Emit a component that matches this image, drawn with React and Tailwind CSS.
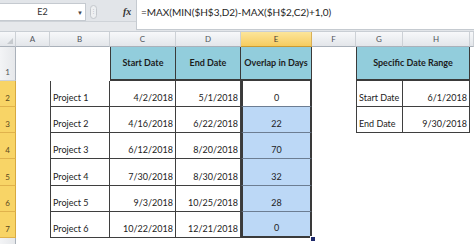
import React from 'react';

const projects = [
  ['Project 1', '4/2/2018', '5/1/2018', '0'],
  ['Project 2', '4/16/2018', '6/22/2018', '22'],
  ['Project 3', '6/12/2018', '8/20/2018', '70'],
  ['Project 4', '7/30/2018', '8/30/2018', '32'],
  ['Project 5', '9/3/2018', '10/25/2018', '28'],
  ['Project 6', '10/22/2018', '12/21/2018', '0'],
];

const rowHeights = ['h-[26px]', 'h-[26px]', 'h-[26px]', 'h-[27px]', 'h-[26px]', 'h-[26px]'];

const colHead = 'flex items-center justify-center bg-gradient-to-b from-[#f7f8fa] to-[#e3e6ea] border-r border-b border-r-[#cdd1d6] border-b-[#aab1ba] text-[8px] text-[#50545a]';
const teal = 'flex items-center justify-center whitespace-nowrap bg-[#92cddc] border-r border-b-2 border-[#3a3a3a] text-[9px] font-bold text-[#1c1c1c]';
const cell = 'flex items-end whitespace-nowrap pb-[2px] px-[2px] text-[9px] text-[#222]';

const FormulaBar = () => (
  <div className="flex h-[32px] bg-[#e2e5e9] border-b border-[#c9ced4]">
    <div className="flex flex-col w-[136px]">
      <div className="flex items-center h-[21px] pt-[2px]">
        <div className="relative flex items-center justify-center w-[86px] h-[18px] bg-white border-y border-r border-[#c5cad0] text-[9px] text-[#333]">
          E2
          <span className="absolute right-[2px] top-[4px] text-[6px] text-[#444]">▼</span>
        </div>
        <div className="ml-[4px] w-[7px] h-[14px] rounded-full border border-[#c3c7cc] bg-[#eef0f2] flex items-center justify-center">
          <span className="text-[5px] text-[#b0b4b9] leading-none">⋮</span>
        </div>
        <span className="ml-[26px] font-['Liberation_Serif',serif] italic font-bold text-[10px] text-[#333]">fx</span>
      </div>
      <div className="flex-1 border-t border-[#cfd3d8] bg-[#e6e8eb]" />
    </div>
    <div className="flex-1 h-[30px] bg-white border-l border-b border-[#c5cad0] pl-[4px] pt-[5px] text-[10px] text-[#1e1e1e]">
      =MAX(MIN($H$3,D2)-MAX($H$2,C2)+1,0)
    </div>
  </div>
);

export default function App() {
  return (
    <div className="w-[474px] h-[244px] overflow-hidden bg-white font-['Lato','Liberation_Sans',sans-serif]">
      <div className="h-[32px]">
        <FormulaBar />
      </div>
      <div className="grid grid-cols-[16px_34px_60px_66px_65px_71px_44px_47px_67px_1fr]">
        {/* column headers */}
        <div className="relative bg-gradient-to-b from-[#f7f8fa] to-[#e3e6ea] border-r border-b border-r-[#cdd1d6] border-b-[#aab1ba] h-[15px]">
          <span className="absolute right-[2px] bottom-[2px] w-0 h-0 border-l-[6px] border-l-transparent border-b-[6px] border-b-[#c6cace]" />
        </div>
        <div className={colHead}>A</div>
        <div className={colHead}>B</div>
        <div className={colHead}>C</div>
        <div className={colHead}>D</div>
        <div className="flex items-center justify-center bg-gradient-to-b from-[#fce59a] to-[#f6cc5e] border-r border-b border-r-[#d9b055] border-b-[#c99a33] text-[8px] text-[#4a4030]">E</div>
        <div className={colHead}>F</div>
        <div className={colHead}>G</div>
        <div className={colHead}>H</div>
        <div className={colHead}></div>

        {/* row 1 */}
        <div className="flex items-end justify-center pb-[2px] h-[34px] bg-gradient-to-r from-[#f3f4f6] to-[#e6e8eb] border-r border-b border-r-[#aab1ba] border-b-[#cdd1d6] text-[8px] text-[#50545a]">1</div>
        <div />
        <div />
        <div className={`${teal} border-l`}>Start Date</div>
        <div className={teal}>End Date</div>
        <div className={teal}>Overlap in Days</div>
        <div />
        <div className={`${teal} border-l col-span-2`}>Specific Date Range</div>
        <div />

        {projects.map((p, i) => {
          const last = i === projects.length - 1;
          const h = rowHeights[i];
          return (
            <React.Fragment key={p[0]}>
              <div className={`flex items-end justify-center pb-[2px] ${h} bg-[#f8d466] border-r border-b border-r-[#d7a940] border-b-[#e0b24c] text-[8px] text-[#5a4a20]`}>{i + 2}</div>
              <div />
              <div className={`${cell} border-l border-r border-b border-[#3f3f3f]`}>{p[0]}</div>
              <div className={`${cell} justify-end border-r border-b border-[#3f3f3f]`}>{p[1]}</div>
              <div className={`${cell} justify-end border-r border-b border-[#3f3f3f]`}>{p[2]}</div>
              <div className={`relative ${cell} justify-center border-x-2 border-x-[#3a3a3a] ${last ? 'border-b-2 border-b-[#3a3a3a]' : 'border-b border-b-[#6c7d92]'} ${i === 0 ? 'bg-white' : 'bg-[#bcd8f6]'}`}>
                {p[3]}
                {last && (
                  <span className="absolute -right-[6px] -bottom-[6px] w-[6px] h-[6px] bg-[#1f2a6b] border border-white" />
                )}
              </div>
              <div />
              {i === 0 && (
                <>
                  <div className={`${cell} text-[8.5px] border-l border-r border-b border-[#3f3f3f]`}>Start Date</div>
                  <div className={`${cell} justify-end border-r border-b border-[#3f3f3f]`}>6/1/2018</div>
                </>
              )}
              {i === 1 && (
                <>
                  <div className={`${cell} text-[8.5px] border-l border-r border-b border-[#3f3f3f]`}>End Date</div>
                  <div className={`${cell} justify-end border-r border-b border-[#3f3f3f]`}>9/30/2018</div>
                </>
              )}
              {i > 1 && (
                <>
                  <div />
                  <div />
                </>
              )}
              <div />
            </React.Fragment>
          );
        })}

        {/* row 8 */}
        <div className="h-[10px] bg-gradient-to-r from-[#f3f4f6] to-[#e6e8eb] border-r border-r-[#aab1ba]" />
      </div>
    </div>
  );
}
